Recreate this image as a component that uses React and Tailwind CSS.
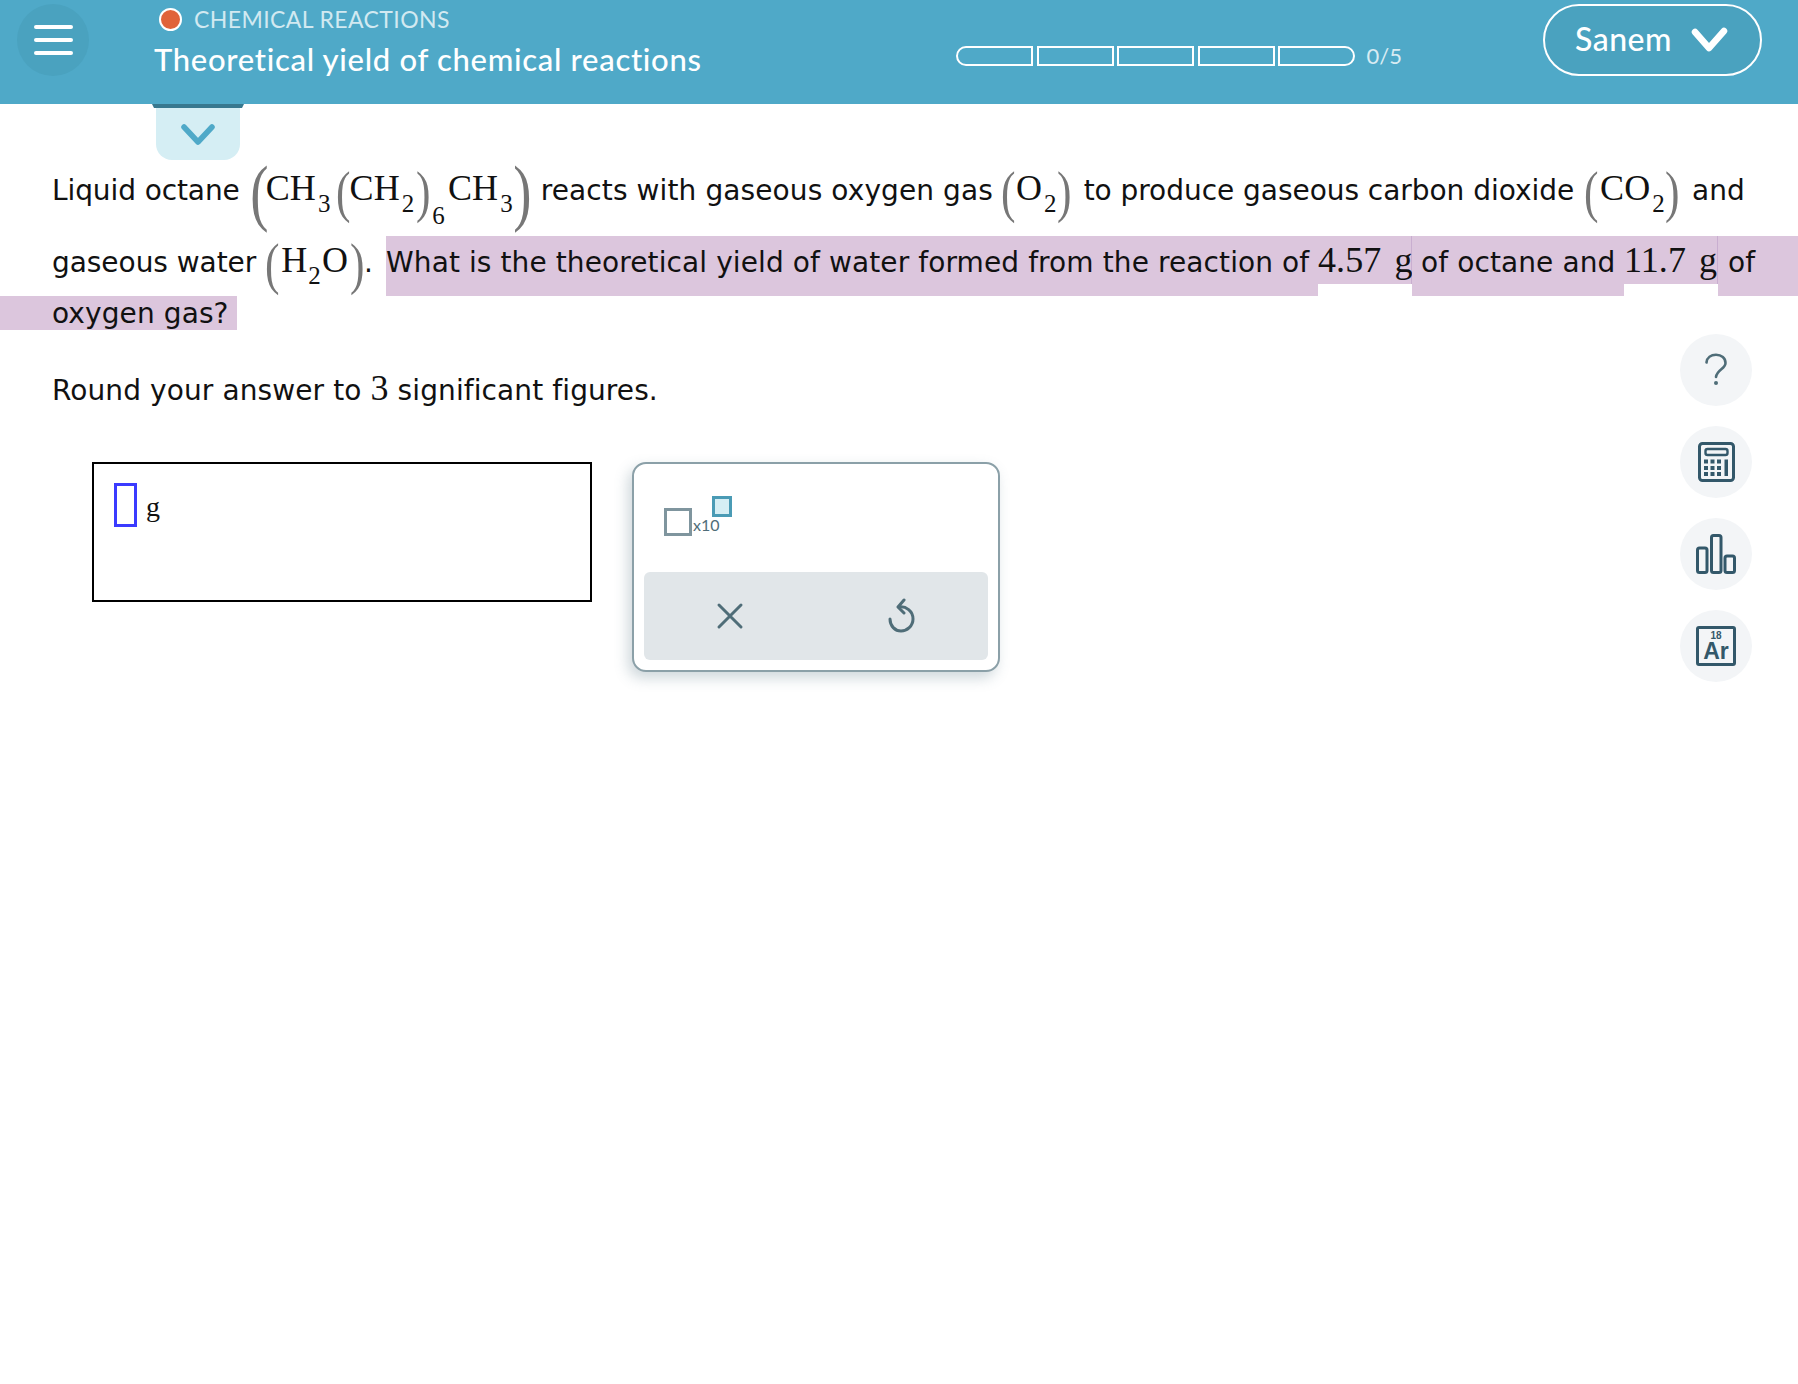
import React from "react";

const Body = "font-['DejaVu_Sans',Verdana,sans-serif]";
const Serif = "font-['Liberation_Serif',serif]";

function PS({ c = "(", cls = "" }) {
  return <span className={`inline-block font-['Liberation_Serif',serif] text-[58px] leading-[0] text-[#777] translate-y-[11px] scale-x-75 w-[16px] ${cls}`}>{c}</span>;
}
function PL({ c = "(", cls = "" }) {
  return <span className={`inline-block font-['Liberation_Serif',serif] text-[73px] leading-[0] text-[#777] translate-y-[17px] scale-x-75 w-[18px] ${cls}`}>{c}</span>;
}
function Sub({ children, cls = "" }) {
  return <span className={`inline-block font-['Liberation_Serif',serif] text-[25px] leading-none translate-y-[12px] ${cls}`}>{children}</span>;
}
function M({ children, cls = "" }) {
  return <span className={`font-['Liberation_Serif',serif] text-[36px] leading-[48px] ${cls}`}>{children}</span>;
}
function Seg({ cls = "" }) {
  return <div className={`h-[20px] w-[77px] border-2 border-white ${cls}`} />;
}
function Circle({ children }) {
  return <div className="w-[72px] h-[72px] rounded-full bg-[#f3f5f7] flex items-center justify-center">{children}</div>;
}

export default function App() {
  return (
    <div className={`w-[1798px] h-[1384px] bg-white text-[#111] overflow-hidden ${Body}`}>
      <header className="h-[104px] bg-[#4fa9c8] flex items-start text-white font-['Lato',sans-serif]">
        <div className="ml-[17px] mt-[4px] w-[72px] h-[72px] rounded-full bg-[#4aa2bf] flex flex-col items-center justify-center gap-[9.5px]">
          <div className="w-[39px] h-[3.5px] rounded-full bg-white" />
          <div className="w-[39px] h-[3.5px] rounded-full bg-white" />
          <div className="w-[39px] h-[3.5px] rounded-full bg-white" />
        </div>
        <div className="ml-[66px] w-[800px]">
          <div className="flex items-center h-[38px] ml-[4px]">
            <div className="w-[23px] h-[23px] rounded-full bg-[#e0633a] border-2 border-white" />
            <span className="ml-[12px] text-[23px] tracking-[0.4px] text-[#d2e9f1]">CHEMICAL REACTIONS</span>
          </div>
          <div className="-ml-[1px] text-[31px] leading-[42px] font-medium tracking-[0.7px]">Theoretical yield of chemical reactions</div>
        </div>
        <div className="mt-[46px] ml-[1px] flex items-center gap-[3.5px]">
          <Seg cls="rounded-l-full" />
          <Seg />
          <Seg />
          <Seg />
          <Seg cls="rounded-r-full" />
          <span className="ml-[8px] text-[22px] leading-[20px] text-[#d8ecf3]">0/5</span>
        </div>
        <div className="ml-[141px] mt-[4px] w-[219px] h-[72px] rounded-full border-2 border-white bg-[#4aa2bf] flex items-center pl-[30px]">
          <span className="text-[32px] font-medium tracking-[0.5px] -mt-[2px]">Sanem</span>
          <svg width="38" height="26" viewBox="0 0 38 26" className="ml-[19px]" fill="none">
            <path d="M4 5 L18 21 L33 4" stroke="white" strokeWidth="6.5" strokeLinecap="round" strokeLinejoin="round" />
          </svg>
        </div>
      </header>

      <div className="ml-[156px] w-[84px] h-[56px] bg-[#d5eef4] rounded-b-[16px] flex flex-col items-center">
        <svg width="92" height="4" viewBox="0 0 92 4" className="shrink-0 -mx-[4px]">
          <path d="M0 0 H92 L90 4 H2 Z" fill="#37788f" />
        </svg>
        <svg width="36" height="24" viewBox="0 0 36 24" className="mt-[15px]" fill="none">
          <path d="M4 4 L18 19 L32 4" stroke="#4fa9c8" strokeWidth="5.5" strokeLinecap="round" strokeLinejoin="round" />
        </svg>
      </div>

      <div className="h-[76px] pl-[52px] pt-[4px] flex items-baseline whitespace-pre text-[28px] leading-[53px] tracking-[0.1px]">
        <span className="tracking-[-0.1px]">Liquid octane</span>
        <PL cls="ml-[8px]" />
        <M>CH</M><Sub cls="ml-[2px]">3</Sub>
        <PS cls="ml-[3px]" />
        <M>CH</M><Sub cls="ml-[2px]">2</Sub>
        <PS c=")" />
        <Sub cls="ml-[2px] translate-y-[24px]">6</Sub>
        <M cls="ml-[3px]">CH</M><Sub cls="ml-[2px]">3</Sub>
        <PL c=")" cls="-ml-[2px]" />
        <span className="ml-[12px]">reacts with gaseous oxygen gas</span>
        <PS cls="ml-[6px]" />
        <M cls="ml-[1px]">O</M><Sub cls="ml-[2px]">2</Sub>
        <PS c=")" cls="-ml-[2px]" />
        <span className="ml-[13px] tracking-[-0.04px]">to produce gaseous carbon dioxide</span>
        <PS cls="ml-[8px]" />
        <M cls="ml-[2px]">CO</M><Sub cls="ml-[2px]">2</Sub>
        <PS c=")" cls="-ml-[2px]" />
        <span className="ml-[13px]">and</span>
      </div>

      <div className="h-[60px] flex items-start whitespace-pre text-[28px] leading-[53px] tracking-[0.1px]">
        <div className="w-[386px] pl-[52px] flex items-baseline">
          <span className="tracking-[-0.05px]">gaseous water</span>
          <PS cls="ml-[7px]" />
          <M cls="ml-[2px]">H</M><Sub cls="ml-[1px]">2</Sub><M cls="ml-[1px]">O</M>
          <PS c=")" />
          <span>.</span>
        </div>
        <div className="w-[932px] h-[60px] bg-[#dcc6dd]">What is the theoretical yield of water formed from the reaction of </div>
        <div className="w-[94px] h-[48px] bg-[#dcc6dd] border-r border-[#c9aed0] flex items-baseline">
          <M>4.57</M><M cls="ml-[13px]">g</M>
        </div>
        <div className="w-[212px] h-[60px] bg-[#dcc6dd] pl-[9px]">of octane and </div>
        <div className="w-[94px] h-[48px] bg-[#dcc6dd] border-r border-[#c9aed0] flex items-baseline">
          <M>11.7</M><M cls="ml-[13px]">g</M>
        </div>
        <div className="flex-1 h-[60px] bg-[#dcc6dd] pl-[10px]">of</div>
      </div>

      <div className="w-[237px] h-[34px] bg-[#dcc6dd] pl-[52px] text-[28px] leading-[35px] tracking-[0.1px]">oxygen gas?</div>

      <div className="flex justify-between pr-[46px] pt-[4px]">
        <div>
          <div className="pl-[52px] h-[128px] pt-[30px] flex items-baseline whitespace-pre text-[28px] leading-[44px] tracking-[0.1px]">
            <span>Round your answer to </span><M>3</M><span> significant figures.</span>
          </div>
          <div className="flex items-start pl-[92px]">
            <div className="w-[500px] h-[140px] border-2 border-black pl-[20px] pt-[19px] flex items-start">
              <div className="w-[23px] h-[44px] border-[3px] border-[#3b3bff]" />
              <span className={`ml-[9px] text-[28px] leading-[44px] mt-[2px] ${Serif}`}>g</span>
            </div>
            <div className="ml-[40px] w-[368px] h-[210px] rounded-[14px] border-2 border-[#8ba0a8] bg-white shadow-[-4px_6px_14px_rgba(80,110,125,0.28)] p-[10px] flex flex-col">
              <div className="h-[99px] pl-[20px] flex items-start">
                <div className="mt-[34px] w-[28px] h-[28px] border-[3px] border-[#7f959e]" />
                <span className="mt-[41px] ml-[1px] text-[16px] leading-[20px] text-[#4f6d78] font-['Lato',sans-serif]">x10</span>
                <div className="mt-[22px] -ml-[8px] w-[20px] h-[21px] border-[3px] border-[#4a9bb5] bg-[#d5eef4]" />
              </div>
              <div className="h-[88px] bg-[#e1e6e9] rounded-[6px] flex items-center pl-[72px]">
                <svg width="28" height="28" viewBox="0 0 28 28" fill="none">
                  <path d="M3 3 L25 25 M25 3 L3 25" stroke="#4f6d78" strokeWidth="3" strokeLinecap="round" />
                </svg>
                <svg width="30" height="36" viewBox="0 0 30 36" fill="none" className="ml-[143px]">
                  <path d="M12 9 C19 8 26 13 26 21 C26 28 20 33 14 33 C8 33 3 28 3 21" stroke="#4f6d78" strokeWidth="3" strokeLinecap="round" />
                  <path d="M17 2 L11 9 L17 15" stroke="#4f6d78" strokeWidth="3" strokeLinecap="round" strokeLinejoin="round" />
                </svg>
              </div>
            </div>
          </div>
        </div>

        <div className="flex flex-col gap-[20px]">
          <Circle>
            <svg width="24" height="34" viewBox="0 0 24 34" fill="none">
              <path d="M2.5 9.5 C3 4.5 7 1.8 12 1.8 C17.5 1.8 21.5 5 21.5 10 C21.5 16 13 16.5 12 24" stroke="#4f6d78" strokeWidth="2.6" strokeLinecap="round" />
              <circle cx="12" cy="30" r="2" fill="#4f6d78" />
            </svg>
          </Circle>
          <Circle>
            <svg width="37" height="40" viewBox="0 0 37 40" fill="none">
              <rect x="1.5" y="1.5" width="34" height="37" rx="3" stroke="#33586a" strokeWidth="3" />
              <rect x="7.5" y="7" width="22" height="6" rx="2" stroke="#33586a" strokeWidth="2.4" />
              <g fill="#33586a">
                <rect x="6" y="17.5" width="4" height="4" /><rect x="12.5" y="17.5" width="4" height="4" /><rect x="19" y="17.5" width="4" height="4" />
                <rect x="6" y="24" width="4" height="4" /><rect x="12.5" y="24" width="4" height="4" /><rect x="19" y="24" width="4" height="4" />
                <rect x="6" y="30" width="4" height="4" /><rect x="12.5" y="30" width="4" height="4" /><rect x="19" y="30" width="4" height="4" />
                <rect x="26.5" y="17.5" width="3.5" height="16.5" />
              </g>
            </svg>
          </Circle>
          <Circle>
            <svg width="40" height="40" viewBox="0 0 40 40" fill="none" stroke="#33586a" strokeWidth="3">
              <rect x="1.5" y="14" width="9.5" height="24.5" rx="2" />
              <rect x="15.5" y="1.5" width="9.5" height="37" rx="2" />
              <rect x="29" y="22" width="9.5" height="16.5" rx="2" />
            </svg>
          </Circle>
          <Circle>
            <div className="w-[40px] h-[40px] border-[3px] border-[#33586a] rounded-[3px] flex flex-col items-center text-[#33586a] font-['Liberation_Sans',sans-serif] font-bold">
              <span className="text-[10px] leading-[10px] mt-[2px]">18</span>
              <span className="text-[23px] leading-[20px]">Ar</span>
            </div>
          </Circle>
        </div>
      </div>
    </div>
  );
}
